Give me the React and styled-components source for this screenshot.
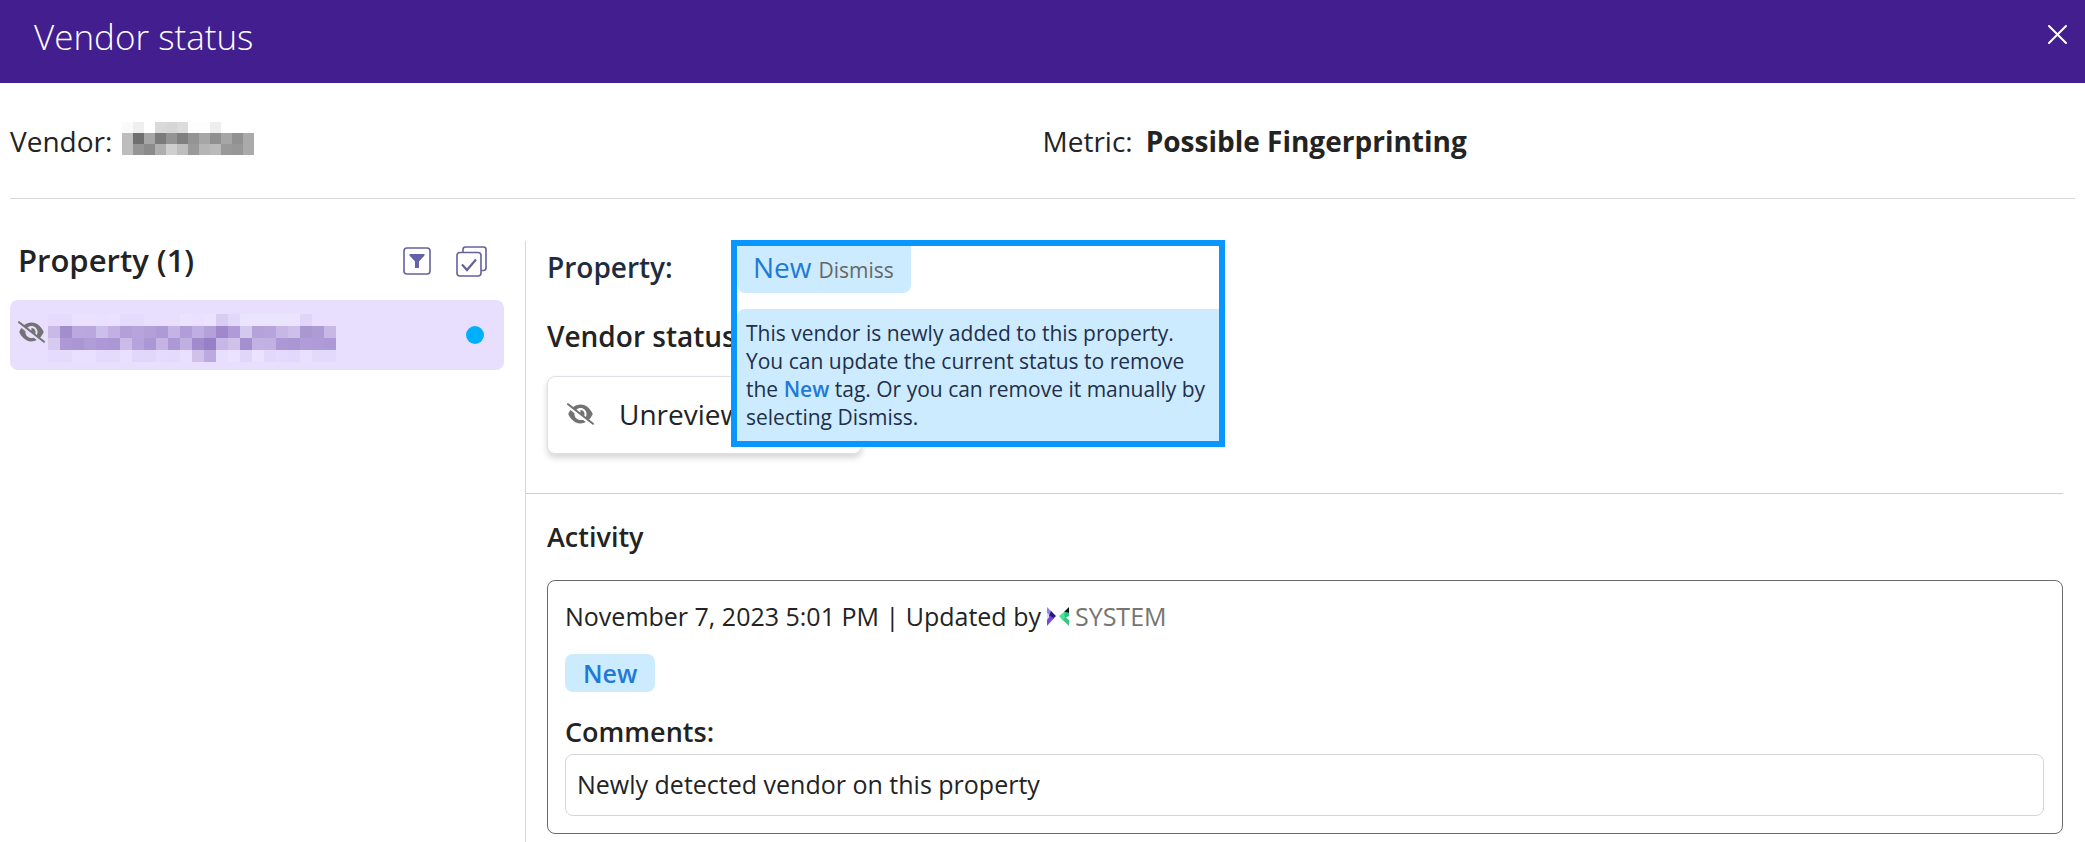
import React from 'react'
import styled, { createGlobalStyle } from 'styled-components'
import { FaEyeSlash } from 'react-icons/fa6'

const GlobalStyle = createGlobalStyle`
  * {
    box-sizing: border-box;
  }
  body {
    margin: 0;
    background: #fff;
    color: #232323;
    font-family: 'Open Sans', 'Noto Sans', sans-serif;
    font-size: 28px;
    line-height: 38px;
  }
  button, input {
    font: inherit;
    color: inherit;
  }
`

const Page = styled.div`
  display: flex;
  flex-direction: column;
  min-height: 100vh;
`

const Header = styled.header`
  display: flex;
  justify-content: space-between;
  align-items: flex-start;
  padding: 13px 16px 22px 34px;
  background: #421e8f;
  color: #fff;
`

const Title = styled.h1`
  margin: 0;
  font-size: 35px;
  font-weight: 300;
  line-height: 48px;
`

const IconButton = styled.button`
  display: flex;
  padding: 0;
  border: 0;
  background: none;
  cursor: pointer;
`

const CloseButton = styled(IconButton)`
  padding: 9px 0;
`

const Meta = styled.div`
  display: grid;
  grid-template-columns: 1fr 1fr;
  margin: 0 10px;
  padding: 39px 0 38px;
  border-bottom: 1px solid #d6d6d6;
`

const MetaItem = styled.div`
  display: flex;
  align-items: flex-start;
  gap: ${props => props.$gap}px;
`

const Body = styled.div`
  display: grid;
  grid-template-columns: 494px 1fr;
  gap: 21px;
  flex: 1;
  margin: 42px 22px 0 10px;
`

const Sidebar = styled.aside`
  display: flex;
  flex-direction: column;
  gap: 19px;
`

const SidebarHeader = styled.div`
  display: flex;
  align-items: center;
  gap: 25px;
  height: 40px;
  padding: 0 17px 0 8px;
`

const SidebarTitle = styled.h2`
  flex: 1;
  margin: 0;
  padding-bottom: 2px;
  font-size: 31px;
  font-weight: 600;
`

const PropertyRow = styled.div`
  display: flex;
  align-items: center;
  justify-content: space-between;
  height: 70px;
  padding: 0 20px 0 8px;
  border-radius: 8px;
  background: #e8dfff;
`

const EyeOff = styled(FaEyeSlash)`
  width: 27px;
  height: 22px;
  color: #737373;
`

const PropertyName = styled.div`
  display: flex;
  align-items: flex-start;
  gap: 3px;
  padding-top: 6px;

  ${EyeOff} {
    margin-top: 7px;
  }
`

const Dot = styled.span`
  width: 18px;
  height: 18px;
  border-radius: 50%;
  background: #00b0ff;
`

const Main = styled.main`
  position: relative;
  border-left: 1px solid #d6d6d6;
`

const StatusSection = styled.section`
  display: flex;
  flex-direction: column;
  align-items: flex-start;
  padding: 7px 0 39px 21px;
  border-bottom: 1px solid #cfcfcf;
`

const Label = styled.h3`
  margin: 0 0 ${props => props.$gap}px;
  color: ${props => props.$color || 'inherit'};
  font-size: ${props => (props.$small ? 27 : 28)}px;
  font-weight: 600;
`

const StatusButton = styled.button`
  display: flex;
  align-items: center;
  gap: 25px;
  width: 315px;
  height: 78px;
  padding: 0 19px 3px;
  border: 1px solid #dfe1e8;
  border-radius: 8px;
  background: #fff;
  box-shadow: 0 4px 6px rgba(0, 0, 0, 0.16);
`

const Callout = styled.div`
  position: absolute;
  top: -1px;
  left: 205px;
  width: 494px;
  border: 6px solid #0a96ff;
  background: #fff;
`

const NewBar = styled.div`
  display: inline-flex;
  align-items: baseline;
  gap: 7px;
  height: 47px;
  padding: 2px 17px 0 16px;
  border-radius: 0 0 8px 8px;
  background: #ccebff;
  color: #1f7ad6;
  vertical-align: top;
`

const Dismiss = styled.button`
  padding: 0;
  border: 0;
  background: none;
  color: #666;
  font-size: 21px;
  line-height: 28px;
  cursor: pointer;
`

const Tip = styled.p`
  margin: 16px 0 0;
  padding: 10px 9px;
  border-top-left-radius: 8px;
  background: #ccebff;
  color: #1f2f4a;
  font-size: 21px;
  line-height: 28px;

  b {
    color: #1f7ad6;
    font-weight: 600;
  }
`

const ActivitySection = styled.section`
  padding: 24px 0 8px 21px;
`

const Card = styled.article`
  display: flex;
  flex-direction: column;
  align-items: flex-start;
  padding: 17px 18px 17px 17px;
  border: 1px solid #6b6b6b;
  border-radius: 8px;
`

const Updated = styled.div`
  display: flex;
  align-items: center;
  gap: 5px;
  font-size: 25px;
  line-height: 36px;
`

const System = styled.span`
  color: #757575;
`

const Tag = styled.span`
  margin: 20px 0 21px;
  padding: 0 18px;
  border-radius: 8px;
  background: #ccebff;
  color: #1f7ad6;
  font-size: 25px;
  font-weight: 600;
`

const CommentLabel = styled.label`
  margin-bottom: 3px;
  font-size: 27px;
  font-weight: 600;
`

const CommentInput = styled.input`
  width: 100%;
  height: 62px;
  padding: 0 11px 2px;
  border: 1px solid #d6d6d6;
  border-radius: 8px;
  background: #fff;
  font-size: 25px;
`

const vendorCells = [
  'fafafa efefef ffffff d9d9d9 d6d6d6 dcdcdc fdfdfd fdfdfd eeeeee ffffff ffffff ffffff',
  'bdbdbd 6f6f6f a6a6a6 7b7b7b 949494 7f7f7f 949494 a6a6a6 909090 a6a6a6 919191 aaaaaa',
  'bdbdbd 959595 8b8b8b afafaf cfcfcf bebebe 9a9a9a b5b5b5 bababa 999999 979797 aaaaaa',
]

const propertyCells = [
  'e5dbfc e5dbfc e9e1ff ebe1fd e9e0ff e9e1ff e5dbfc e5dbfc e8dfff e8dfff e8dfff ebe2ff e9e0ff ebe2ff d8ccf0 e2d8fa ebe4ff ebe4ff ebe4ff ebe4ff ebe4ff e0d5f8 e8dfff e8dfff',
  'c9b9e6 a28dcd baa8df b9a7dd cdbfeb c2b0e3 b3a0d9 b7a4dc b3a0d9 ae9ad6 c4b4e5 b19dd7 bfaee1 b4a1da 9f89cc b09bd8 d5c8f0 b5a2da b7a4dc c7b7e7 cdbeea a997d2 ae9bd6 c8b8e6',
  'd6caee ae99d6 aa96d3 b09cd7 ae99d6 ac97d5 cabbe8 b6a3db ac97d5 c4b3e3 ad99d6 c0afe1 a18bcc 9780c6 c7b7e6 cfc1ea a48fcf c2b1e3 c1b0e2 ac98d4 aa96d3 b09cd8 af9bd7 ad99d5',
  'e5dbfc e4dafb e9e0ff e9e0ff e4dafb e4dafb e9e0ff e1d7fa e1d7fa e5dbfc e4dafb e9e0ff d0c1ea bba9df e8dfff eae2ff e1d6fa eae2ff e3d8fb e4dafb e3d8fb e9e0ff e3d9fb e3d9fb',
]

const Mosaic = ({ cells, size }) => {
  const rows = cells.map(row => row.split(' '))
  return (
    <svg
      width={rows[0].length * size}
      height={rows.length * size}
      shapeRendering="crispEdges"
      aria-hidden="true"
    >
      {rows.map((row, y) =>
        row.map((fill, x) => (
          <rect
            key={`${x}-${y}`}
            x={x * size}
            y={y * size}
            width={size}
            height={size}
            fill={`#${fill}`}
          />
        ))
      )}
    </svg>
  )
}

const CloseIcon = () => (
  <svg width="24" height="24" fill="none" stroke="#fff" strokeWidth="2" strokeLinecap="round">
    <path d="M4 4l17 17M21 4L4 21" />
  </svg>
)

const FilterIcon = () => (
  <svg width="28" height="28" fill="none">
    <rect x="1" y="1" width="26" height="26" rx="3" stroke="#64619c" strokeWidth="1.6" />
    <path d="M6.500 7h15v1.500l-5.500 6V21h-4v-6.500l-5.500-6z" fill="#6264a7" />
  </svg>
)

const SelectAllIcon = () => (
  <svg width="31" height="31" fill="none" stroke="#64619c" strokeWidth="1.600">
    <path d="M7 6V3.500Q7 1 9.500 1H27.500Q30 1 30 3.500V22Q30 24.500 27.500 24.500H25" />
    <rect x="1" y="6.500" width="24" height="23.500" rx="3" />
    <path d="M6 18.500l5 5.500 9-10.500" strokeWidth="2.200" />
  </svg>
)

const SystemLogo = () => (
  <svg width="24" height="20">
    <path d="M1 1l5 5v4H4L1 7z" fill="#8d83f0" />
    <path d="M1 7l3 3-3 4z" fill="#d9d2fa" />
    <path d="M5 5l5 5-4 4-3-4z" fill="#2b1a78" />
    <path d="M4 10l4 2-7 8v-6z" fill="#7448dc" />
    <path d="M23 1v6l-5-1z" fill="#06150f" />
    <path d="M18 6l-5 4 4 5 3-5z" fill="#4be39c" />
    <path d="M18 6l5 1v3l-4 2z" fill="#1fc985" />
    <path d="M17 14l2-3 4 3v6z" fill="#3ac47d" />
  </svg>
)

const App = () => (
  <Page>
    <GlobalStyle />
    <Header>
      <Title>Vendor status</Title>
      <CloseButton type="button" aria-label="Close">
        <CloseIcon />
      </CloseButton>
    </Header>
    <Meta>
      <MetaItem $gap={10}>
        <span>Vendor:</span>
        <Mosaic cells={vendorCells} size={11} />
      </MetaItem>
      <MetaItem $gap={13}>
        <span>Metric:</span>
        <b>Possible Fingerprinting</b>
      </MetaItem>
    </Meta>
    <Body>
      <Sidebar>
        <SidebarHeader>
          <SidebarTitle>Property (1)</SidebarTitle>
          <IconButton type="button" aria-label="Filter">
            <FilterIcon />
          </IconButton>
          <IconButton type="button" aria-label="Select all">
            <SelectAllIcon />
          </IconButton>
        </SidebarHeader>
        <PropertyRow>
          <PropertyName>
            <EyeOff />
            <Mosaic cells={propertyCells} size={12} />
          </PropertyName>
          <Dot />
        </PropertyRow>
      </Sidebar>
      <Main>
        <StatusSection>
          <Label $gap={31} $color="#1f2c40">Property:</Label>
          <Label $gap={21}>Vendor status</Label>
          <StatusButton type="button">
            <EyeOff />
            Unreviewed
          </StatusButton>
        </StatusSection>
        <Callout>
          <NewBar>
            New
            <Dismiss type="button">Dismiss</Dismiss>
          </NewBar>
          <Tip>
            This vendor is newly added to this property. You can update the current
            status to remove the <b>New</b> tag. Or you can remove it manually by
            selecting Dismiss.
          </Tip>
        </Callout>
        <ActivitySection>
          <Label $gap={24} $small>Activity</Label>
          <Card>
            <Updated>
              <span>November 7, 2023 5:01 PM | Updated by</span>
              <SystemLogo />
              <System>SYSTEM</System>
            </Updated>
            <Tag>New</Tag>
            <CommentLabel htmlFor="comment">Comments:</CommentLabel>
            <CommentInput
              id="comment"
              type="text"
              readOnly
              value="Newly detected vendor on this property"
            />
          </Card>
        </ActivitySection>
      </Main>
    </Body>
  </Page>
)

export default App
